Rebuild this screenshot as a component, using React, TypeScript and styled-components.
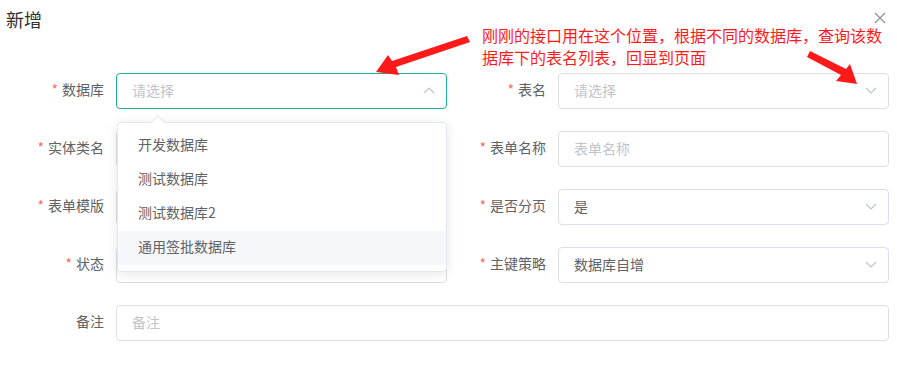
import { createGlobalStyle, styled } from 'styled-components';
import * as React from 'react';

const GlobalStyle = createGlobalStyle`
  html, body {
    margin: 0;
    padding: 0;
    background: #fff;
  }
  body {
    font-family: "Noto Sans CJK SC", "Noto Sans", sans-serif;
  }
  * {
    box-sizing: border-box;
  }
`;

const databases = ['开发数据库', '测试数据库', '测试数据库2', '通用签批数据库'];

interface IFieldProps {
  label: string;
  required?: boolean;
  children: React.ReactNode;
  full?: boolean;
}

const Field: React.FC<IFieldProps> = ({ label, required, children, full }) => (
  <Item $full={full}>
    <Label>
      {required && <Star>*</Star>}
      {label}
    </Label>
    <Control>{children}</Control>
  </Item>
);

const Chevron: React.FC<{ up?: boolean }> = ({ up }) => (
  <Arrow width="12" height="7" viewBox="0 0 12 7">
    <polyline
      points={up ? '1,6 6,1 11,6' : '1,1 6,6 11,1'}
      fill="none"
      stroke="#c0c4cc"
      strokeWidth="1.2"
    />
  </Arrow>
);

const App: React.FC = () => {
  return (
    <>
      <GlobalStyle />
      <Dialog>
        <Header>
          <Title>新增</Title>
          <Close aria-label="close">
            <svg width="12" height="12" viewBox="0 0 12 12">
              <path d="M1 1 L11 11 M11 1 L1 11" stroke="#909399" strokeWidth="1.3" />
            </svg>
          </Close>
        </Header>
        <Form>
          <Field label="数据库" required>
            <Select $focused>
              <Placeholder>请选择</Placeholder>
              <Chevron up />
            </Select>
            <Dropdown>
              <Caret />
              {databases.map((d, i) => (
                <Option key={d} $hover={i === databases.length - 1}>
                  {d}
                </Option>
              ))}
            </Dropdown>
          </Field>
          <Field label="表名" required>
            <Select>
              <Placeholder>请选择</Placeholder>
              <Chevron />
            </Select>
          </Field>
          <Field label="实体类名" required>
            <Select>
              <Placeholder />
            </Select>
          </Field>
          <Field label="表单名称" required>
            <Select>
              <Placeholder>表单名称</Placeholder>
            </Select>
          </Field>
          <Field label="表单模版" required>
            <Select>
              <Placeholder />
              <Chevron />
            </Select>
          </Field>
          <Field label="是否分页" required>
            <Select>
              <Value>是</Value>
              <Chevron />
            </Select>
          </Field>
          <Field label="状态" required>
            <Select>
              <Placeholder />
              <Chevron />
            </Select>
          </Field>
          <Field label="主键策略" required>
            <Select>
              <Value>数据库自增</Value>
              <Chevron />
            </Select>
          </Field>
          <Field label="备注" full>
            <Select>
              <Placeholder>备注</Placeholder>
            </Select>
          </Field>
        </Form>
        <Note>
          刚刚的接口用在这个位置，根据不同的数据库，查询该数
          <br />
          据库下的表名列表，回显到页面
        </Note>
        <Annotation width="897" height="365" viewBox="0 0 897 365">
          <polygon
            points="376,72 388,55 392,61 467,36 470,42 396,67 399,75"
            fill="#ff1a1a"
          />
          <polygon
            points="857,84 836,81 841,75 807,57 810,51 846,69 850,64"
            fill="#ff1a1a"
          />
        </Annotation>
      </Dialog>
    </>
  );
};

const Dialog = styled.div`
  position: relative;
  width: 897px;
  height: 365px;
  background: #fff;
  overflow: hidden;
`;

const Header = styled.div`
  display: flex;
  align-items: center;
  justify-content: space-between;
  padding: 6px 10px 0 6px;
  height: 31px;
`;

const Title = styled.span`
  color: #303133;
  font: normal 400 18px / 24px "Noto Sans CJK SC", sans-serif;
`;

const Close = styled.button`
  position: absolute;
  top: 11px;
  right: 10px;
  width: 14px;
  height: 14px;
  padding: 0;
  border: none;
  background: none;
  display: flex;
  align-items: center;
  justify-content: center;
`;

const Form = styled.form`
  display: grid;
  grid-template-columns: 431px 431px;
  column-gap: 11px;
  padding: 42px 8px 0 16px;
`;

const Item = styled.div<{ $full?: boolean }>`
  position: relative;
  display: flex;
  margin-bottom: 22px;
  grid-column: ${(p) => (p.$full ? '1 / span 2' : 'auto')};
`;

const Label = styled.label`
  flex: 0 0 100px;
  padding-right: 12px;
  text-align: right;
  color: #606266;
  font: normal 400 14px / 33px "Noto Sans CJK SC", sans-serif;
  white-space: nowrap;
`;

const Star = styled.span`
  color: #f56c6c;
  margin-right: 4px;
`;

const Control = styled.div`
  position: relative;
  flex: 1;
`;

const Select = styled.div<{ $focused?: boolean }>`
  display: flex;
  align-items: center;
  height: 36px;
  padding: 0 15px 2px;
  border: 1px solid ${(p) => (p.$focused ? '#1ab394' : '#dcdfe6')};
  border-radius: 4px;
  background: #fff;
  font: normal 400 14px / 20px "Noto Sans CJK SC", sans-serif;
`;

const Placeholder = styled.span`
  flex: 1;
  color: #c0c4cc;
`;

const Value = styled.span`
  flex: 1;
  color: #606266;
`;

const Arrow = styled.svg`
  flex-shrink: 0;
  margin-right: -4px;
`;

const Dropdown = styled.ul`
  position: absolute;
  top: 49px;
  left: 1px;
  right: 0;
  margin: 0;
  padding: 6px 0;
  list-style: none;
  background: #fff;
  border: 1px solid #e4e7ed;
  border-radius: 4px;
  box-shadow: 0 2px 12px 0 rgba(0, 0, 0, 0.1);
  z-index: 10;
`;

const Caret = styled.span`
  position: absolute;
  top: -6px;
  left: 35px;
  width: 10px;
  height: 10px;
  background: #fff;
  border-top: 1px solid #e4e7ed;
  border-left: 1px solid #e4e7ed;
  transform: rotate(45deg);
`;

const Option = styled.li<{ $hover?: boolean }>`
  position: relative;
  height: 34px;
  padding: 0 20px;
  color: #606266;
  background: ${(p) => (p.$hover ? '#f5f7fa' : '#fff')};
  font: normal 400 14px / 31px "Noto Sans CJK SC", sans-serif;
`;

const Note = styled.div`
  position: absolute;
  top: 24px;
  left: 482px;
  color: #ff1a1a;
  font: normal 400 16px / 22px "Noto Sans CJK SC", sans-serif;
  white-space: nowrap;
`;

const Annotation = styled.svg`
  position: absolute;
  top: 0;
  left: 0;
  pointer-events: none;
`;

export default App;
